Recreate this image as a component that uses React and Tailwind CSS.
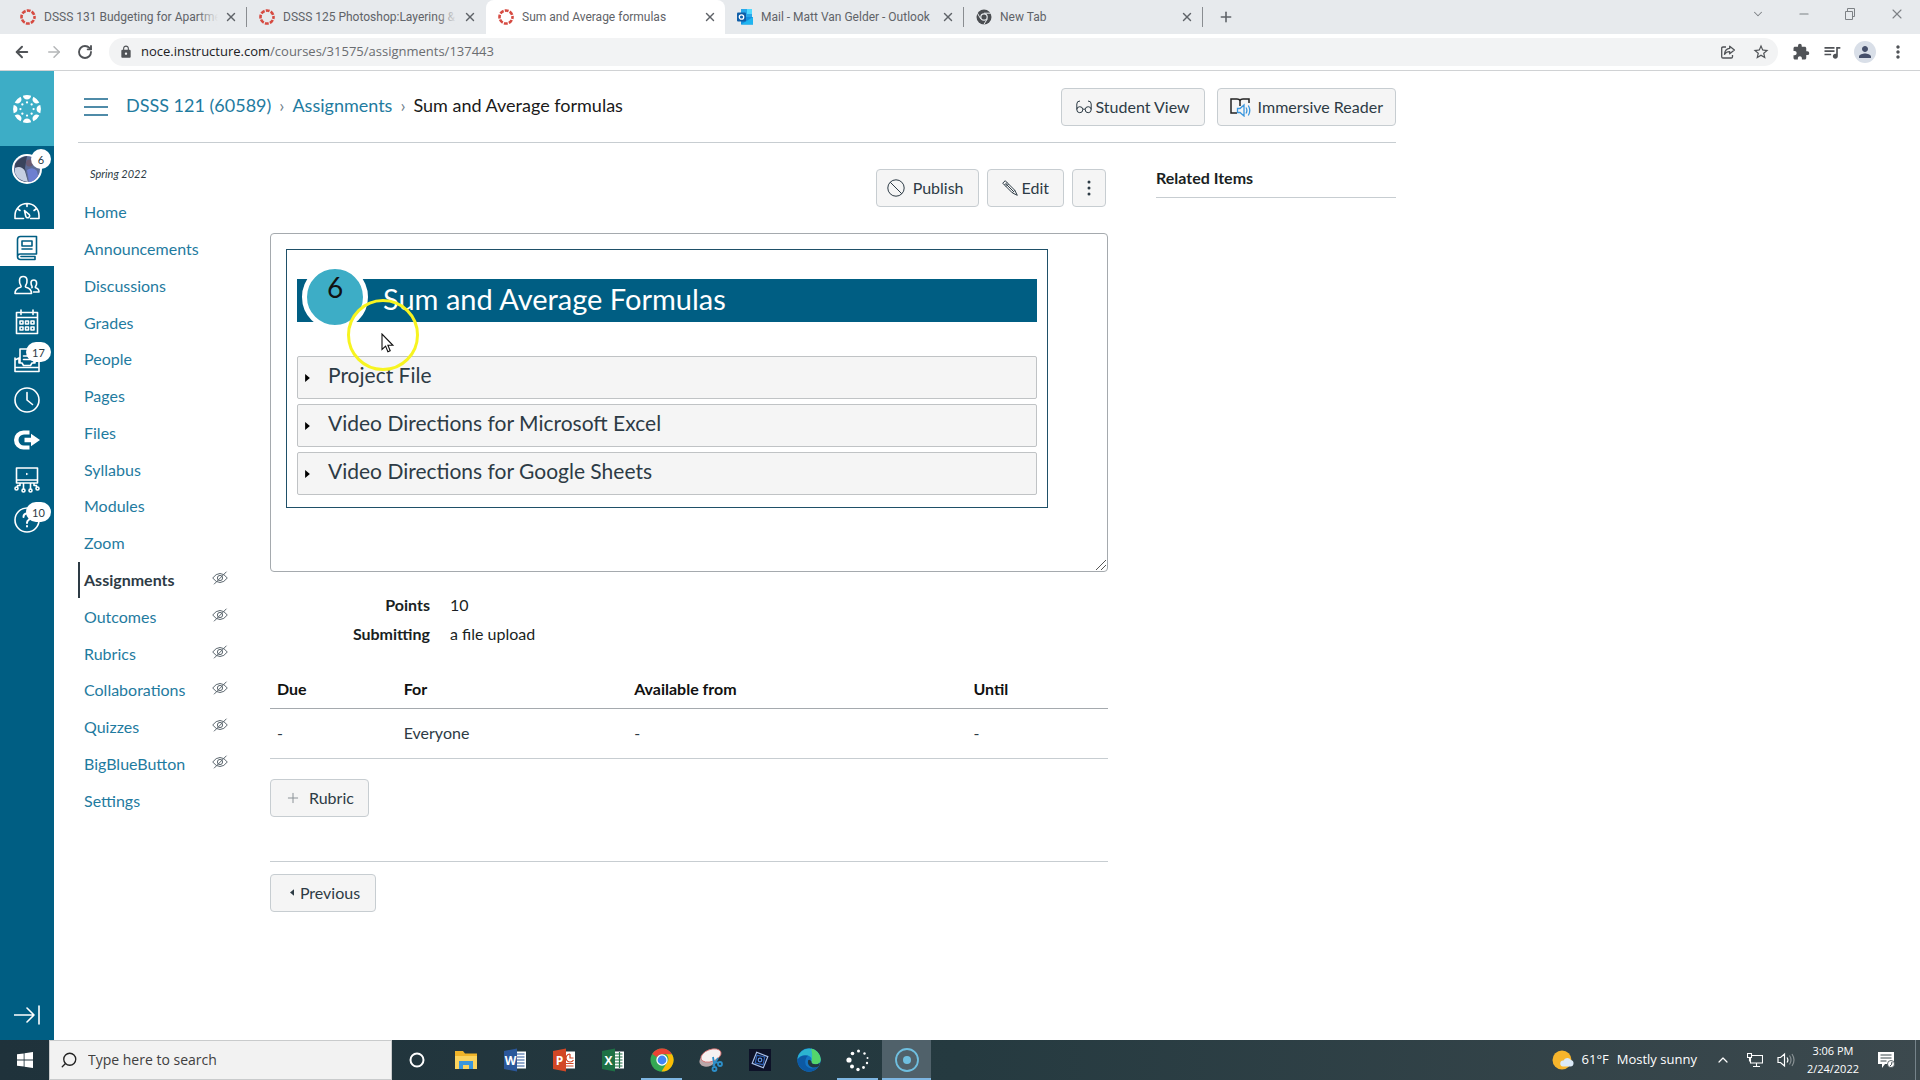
import React from "react";
import { X, Plus, ChevronDown, Minus, ArrowLeft, ArrowRight, RotateCw, Search, ChevronUp } from "lucide-react";
import { MdLock, MdExtension, MdQueueMusic, MdPerson, MdMoreVert, MdStarBorder } from "react-icons/md";

const ui = "font-['Open_Sans','Noto_Sans',sans-serif]";

function CanvasMark({ className }) {
  const spokes = [0, 45, 90, 135, 180, 225, 270, 315];
  return (
    <svg viewBox="-16 -16 32 32" className={className} fill="currentColor" aria-hidden="true">
      {spokes.map((a) => (
        <g key={a} transform={`rotate(${a})`}>
          <path d="M-4.4 -14.2 A15 15 0 0 1 4.4 -14.2 Q3.6 -10.2 0 -10.2 Q-3.6 -10.2 -4.4 -14.2Z" />
          <circle cx="0" cy="-7" r="1.2" />
        </g>
      ))}
    </svg>
  );
}

function CanvasFavicon() {
  return (
    <svg viewBox="0 0 16 16" className="size-4 shrink-0" aria-hidden="true">
      <circle cx="8" cy="8" r="6.5" fill="none" stroke="#d64b42" strokeWidth="2.6" strokeDasharray="3.9 1.2" strokeDashoffset="2" />
    </svg>
  );
}

function OutlookIcon() {
  return (
    <svg viewBox="0 0 16 16" className="size-4 shrink-0" aria-hidden="true">
      <path d="M4 0h11v9H4z" fill="#28a8ea" />
      <path d="M10 0h5v5h-5z" fill="#50d9ff" />
      <path d="M4 8h12v7.5H4z" fill="#1490df" />
      <path d="M4 15.5 16 8v7.5z" fill="#1fb5f0" />
      <rect x="0" y="3.5" width="9" height="9" rx="1" fill="#0f5ea8" />
      <circle cx="4.5" cy="8" r="2.2" fill="none" stroke="#fff" strokeWidth="1.3" />
    </svg>
  );
}

function ChromeGray() {
  return (
    <svg viewBox="0 0 16 16" className="size-4 shrink-0" aria-hidden="true">
      <circle cx="8" cy="8" r="7.5" fill="#4a4d51" />
      <circle cx="8" cy="8" r="3.8" fill="#e7eaed" />
      <circle cx="8" cy="8" r="2.6" fill="#4a4d51" />
      <path d="M8 4.2h6.8M4.7 9.9 1.4 4.1M11.3 9.9 7.9 15.4" stroke="#e7eaed" strokeWidth="1" />
    </svg>
  );
}

const tabs = [
  { title: "DSSS 131 Budgeting for Apartme", icon: <CanvasFavicon />, fade: true },
  { title: "DSSS 125 Photoshop:Layering &", icon: <CanvasFavicon />, fade: true, last: true },
  { title: "Sum and Average formulas", icon: <CanvasFavicon />, active: true },
  { title: "Mail - Matt Van Gelder - Outlook", icon: <OutlookIcon /> },
  { title: "New Tab", icon: <ChromeGray /> },
];

function TabStrip() {
  return (
    <div className="flex h-[34px] items-stretch bg-[#e7eaed] pl-2 text-[#5f6368]">
      {tabs.map((t) => (
        <div
          key={t.title}
          className={
            t.active
              ? "flex w-[239px] items-center rounded-t-lg bg-white pr-2"
              : "flex w-[239px] items-center"
          }
        >
          <div className="flex min-w-0 flex-1 items-center gap-2 pl-3">
            {t.icon}
            <span className="relative min-w-0 flex-1 overflow-hidden font-[Roboto,sans-serif] text-xs whitespace-nowrap">
              {t.title}
              {t.fade && <span className="absolute inset-y-0 right-0 w-5 bg-linear-to-r from-transparent to-[#e7eaed]" />}
            </span>
          </div>
          <button aria-label="Close tab" className={t.active ? "" : "ml-1.5 pr-2"}>
            <X className="size-3.5" strokeWidth={2.4} />
          </button>
          {!t.active && !t.last && <span className="h-5 w-px bg-[#8a8d91]" />}
          {t.last && <span className="w-px" />}
        </div>
      ))}
      <button aria-label="New tab" className="ml-[15px] self-center">
        <Plus className="size-4" strokeWidth={2.4} />
      </button>
      <div className="ml-auto flex items-center gap-8 pr-[15px] pb-1.5 text-[#7d8185]">
        <button aria-label="Search tabs"><ChevronDown className="size-3.5" strokeWidth={1.8} /></button>
        <button aria-label="Minimize"><Minus className="size-3.5" strokeWidth={1.8} /></button>
        <button aria-label="Restore">
          <svg viewBox="0 0 14 14" className="size-3.5" fill="none" stroke="currentColor"><path d="M2.5 4.5h7v8h-7zM4.5 4.5v-3h7v8h-2" /></svg>
        </button>
        <button aria-label="Close"><X className="size-4" strokeWidth={1.6} /></button>
      </div>
    </div>
  );
}

function Toolbar() {
  return (
    <div className="flex h-[37px] items-center border-b border-[#d0d2d4] bg-white pr-3 pl-[13px] text-[#505357]">
      <button aria-label="Back"><ArrowLeft className="size-[18px]" strokeWidth={2.6} /></button>
      <button aria-label="Forward" className="ml-3.5 text-[#b4b6b8]"><ArrowRight className="size-[18px]" strokeWidth={2} /></button>
      <button aria-label="Reload" className="ml-3.5"><RotateCw className="size-4" strokeWidth={2.8} /></button>
      <div className="ml-4 flex h-7 flex-1 items-center rounded-full bg-[#f2f3f4] pr-2 pl-2.5">
        <MdLock className="size-3.5" />
        <div className="ml-2 flex-1 text-[13px] text-[#6a6d71]">
          <span className="text-[#202124]">noce.instructure.com</span>/courses/31575/assignments/137443
        </div>
        <button aria-label="Share">
          <svg viewBox="0 0 16 16" className="size-4" fill="none" stroke="currentColor" strokeWidth="1.3" strokeLinejoin="round">
            <path d="M6 3H3Q1.7 3 1.7 4.3v8.4Q1.7 14 3 14h8.2q1.3 0 1.3-1.3V11" />
            <path d="M9.7 2.2 14.4 6 9.7 9.8V7.6Q6.3 7.5 4.5 10.3 5 4.8 9.7 4.4z" />
          </svg>
        </button>
        <button aria-label="Bookmark" className="ml-4"><MdStarBorder className="size-[18px]" /></button>
      </div>
      <button aria-label="Extensions" className="ml-3.5"><MdExtension className="size-[18px]" /></button>
      <button aria-label="Media" className="ml-3"><MdQueueMusic className="size-5" /></button>
      <button aria-label="Profile" className="ml-3 grid size-[22px] place-items-center rounded-full bg-[#d9dfe8] text-[#46506b]">
        <MdPerson className="size-[18px]" />
      </button>
      <button aria-label="Menu" className="ml-3"><MdMoreVert className="size-5" /></button>
    </div>
  );
}

function Count({ children }) {
  return (
    <span className="absolute top-0.5 left-[26px] grid h-5 min-w-5 place-items-center rounded-full bg-white px-1.5 text-[11px] leading-none text-[#2d3b45]">
      {children}
    </span>
  );
}

const line = { fill: "none", stroke: "currentColor", strokeWidth: 1.6, strokeLinejoin: "round", strokeLinecap: "round" };

const navIcons = {
  dashboard: (
    <svg viewBox="0 0 26 26" className="size-[26px]" {...line}>
      <path d="M9.500 20.500H1v-3a12 12 0 0 1 24 0v3h-8.500M13 5.500v3M4 11l2 1.500M22 11l-2 1.500M10.500 12.500l1.200 5.500a2 2 0 1 0 3.600-1.400z" />
    </svg>
  ),
  courses: (
    <svg viewBox="0 0 26 26" className="size-[26px]" {...line}>
      <path d="M22.500 1.500h-16q-3 0-3 3v17q0 3 3 3h14.500v-3M22.500 1.500v17.500h-16q-3 0-3 2.500M21 21.500H7M8 6h10v5H8zM8 14h10" />
    </svg>
  ),
  people: (
    <svg viewBox="0 0 26 26" className="size-[26px]" {...line}>
      <path d="M1 21.500q0-5 5.500-6.200 1-.3.300-1.800Q5.200 11.500 5.500 8q.3-3.500 3.700-3.500T13 8q.3 3.500-1.300 5.500-.7 1.500.3 1.800 5.500 1.200 5.500 6.200z" />
      <path d="M19.500 20H25q0-3.500-3.300-4.300-.7-.4 0-1.500 1-1.300.9-3.200-.2-3-2.800-3T17 10.500q0 2.200.9 3.700.6 1 0 1.500" />
    </svg>
  ),
  calendar: (
    <svg viewBox="0 0 26 26" className="size-[26px]" {...line}>
      <path d="M2.500 3.500h21v21h-21zM2.500 8.500h21M7 1v4.500M19 1v4.500M6 12h3v3H6zM11.500 12h3v3h-3zM17 12h3v3h-3zM6 18h3v3H6zM11.500 18h3v3h-3zM17 18h3v3h-3z" />
    </svg>
  ),
  inbox: (
    <svg viewBox="0 0 26 26" className="size-[26px]" {...line}>
      <path d="M1 11v13.500h24V11M1 20.500h24M1 13l4-2v5h3l1.500 2.500h7L18 16h3v-5l4 2M6 16V2h11l3 3v11M9.500 9h7M9.500 12.500h7" />
    </svg>
  ),
  history: (
    <svg viewBox="0 0 26 26" className="size-[26px]" {...line}>
      <circle cx="13" cy="13" r="12" /><path d="M13 5.500V13l5.500 4.500" />
    </svg>
  ),
  commons: (
    <svg viewBox="0 0 26 26" className="size-[26px]" fill="currentColor">
      <path d="M15.500 3.500v4h-5.500a5.500 5.500 0 0 0 0 11h5.500v4h-6a9.500 9.500 0 0 1 0-19z" />
      <path d="M10.500 10.800h6.500v-4L26 13l-9 6.200v-4h-6.500z" />
    </svg>
  ),
  studio: (
    <svg viewBox="0 0 26 26" className="size-[26px]" {...line}>
      <path d="M2.500 1h21v15h-21zM2.500 13h21M9.500 16v6M16.500 16v6M6 16v2.500H3.500v1.500M20 16v2.500h2.500V20" />
      <circle cx="2.500" cy="21.500" r="1.500" /><circle cx="9.500" cy="23.500" r="1.500" /><circle cx="16.500" cy="23.500" r="1.500" /><circle cx="23.500" cy="21.500" r="1.500" />
      <path d="M12 5.700 14.500 7 12 8.300z" fill="currentColor" stroke="none" />
    </svg>
  ),
  help: (
    <svg viewBox="0 0 26 26" className="size-[26px]" {...line}>
      <circle cx="13" cy="13" r="12" /><path d="M9.500 10Q9.500 6.500 13 6.500T16.500 10Q16.500 12 14.500 13 13 14 13 16M13 19v.500" strokeWidth="2" />
    </svg>
  ),
};

const navGroups = [
  {
    row: "relative flex h-[37px] items-center justify-center",
    items: [["dashboard", "Dashboard"], ["courses", "Courses"], ["people", "Groups"], ["calendar", "Calendar"]],
  },
  {
    row: "relative flex h-10 items-center justify-center",
    items: [["inbox", "Inbox", "17"], ["history", "History"], ["commons", "Commons"], ["studio", "Studio"], ["help", "Help", "10"]],
  },
];

function GlobalNav() {
  return (
    <nav className="flex w-[54px] shrink-0 flex-col bg-[#005e83] text-white">
      <a href="#home" aria-label="Canvas home" className="grid h-[75px] place-items-center bg-[#3dadc6]">
        <CanvasMark className="size-[30px]" />
      </a>
      <a href="#account" aria-label="Account" className="relative my-1 flex h-[38px] items-center justify-center">
        <svg viewBox="0 0 30 30" className="size-[30px]">
          <circle cx="15" cy="15" r="15" fill="#fff" />
          <circle cx="15" cy="15" r="13" fill="#5c6b96" />
          <path d="M3 10Q8 3 15 2l-2 12 3 14Q8 28 4 21z" fill="#39435c" />
          <path d="M3 14q6-3 10 3l3 11Q6 27 3 19z" fill="#c5cfe2" />
          <path d="M15 16q6-4 10 1l1 5q-4 6-9 6z" fill="#6d7fd0" />
          <circle cx="17.500" cy="9" r="3.500" fill="#6a5a72" />
        </svg>
        <span className="absolute -top-px left-[31px] grid size-5 place-items-center rounded-full bg-white text-[11px] leading-none text-[#2d3b45]">6</span>
      </a>
      {navGroups.map((group) => (
        <ul key={group.row}>
          {group.items.map(([id, label, count]) => (
            <li key={id} className={id === "courses" ? "bg-white text-[#005e83]" : ""}>
              <a href={"#" + id} aria-label={label} className={group.row}>
                {navIcons[id]}
                {count && <Count>{count}</Count>}
              </a>
            </li>
          ))}
        </ul>
      ))}
      <button aria-label="Expand navigation" className="mt-auto flex h-[50px] items-center justify-center">
        <svg viewBox="0 0 26 20" className="h-5 w-[26px]" {...line}><path d="M0 10h20M13 3l7 7-7 7M25 1v18" /></svg>
      </button>
    </nav>
  );
}

const courseLinks = [
  ["Home"], ["Announcements"], ["Discussions"], ["Grades"], ["People"], ["Pages"], ["Files"], ["Syllabus"],
  ["Modules"], ["Zoom"], ["Assignments", true, true], ["Outcomes", true], ["Rubrics", true],
  ["Collaborations", true], ["Quizzes", true], ["BigBlueButton", true], ["Settings"],
];

function HiddenEye() {
  return (
    <svg viewBox="0 0 16 14" className="mb-1 h-3.5 w-4 text-[#5b666e]" fill="none" stroke="currentColor" strokeWidth="1" aria-hidden="true">
      <path d="M.7 7Q4 2.500 8 2.500T15.300 7Q12 11.500 8 11.500T.7 7zM14.500.7 2 13.300" /><circle cx="8" cy="7" r="2.600" />
    </svg>
  );
}

function CourseNav() {
  return (
    <aside className="w-[150px] shrink-0">
      <p className="pt-[23px] pl-3 text-[11px] leading-4 text-[#2d3b45] italic">Spring 2022</p>
      <ul className="mt-3 grid min-h-[625px] auto-rows-fr">
        {courseLinks.map(([name, hidden, active]) => (
          <li
            key={name}
            className={
              active
                ? "flex items-center justify-between border-l-2 border-[#2d3b45] pl-1 font-bold text-[#2d3b45]"
                : "flex items-center justify-between pl-1.5 text-[#1f7ba0]"
            }
          >
            <a href={"#" + name}>{name}</a>
            {hidden && <HiddenEye />}
          </li>
        ))}
      </ul>
    </aside>
  );
}

const btn = "flex h-[38px] items-center justify-center rounded-sm border border-[#c7cdd1] bg-[#f5f5f5] text-[#2d3b45]";

function Triangle({ left }) {
  return (
    <svg viewBox="0 0 6 10" className={left ? "h-[7px] w-1" : "h-2 w-[5px]"} fill="currentColor" aria-hidden="true">
      <path d={left ? "M6 0v10L0 5z" : "M0 0v10l6-5z"} />
    </svg>
  );
}

function Pointer() {
  return (
    <div className="pointer-events-none absolute top-5 left-[50px] z-10 size-[72px] rounded-full border-[3px] border-[#f7f420]">
      <svg viewBox="0 0 14 20" className="absolute top-[31px] left-[31px] h-5 w-3.5" fill="#fff" stroke="#111" strokeWidth="1.100">
        <path d="M1 1v15.500l3.600-3.400 2.300 5.600 2.300-1-2.300-5.400h5z" />
      </svg>
    </div>
  );
}

function Description() {
  return (
    <section className="relative mt-[26px] min-h-[339px] rounded border border-[#a5aaae] px-[15px] py-[15px]">
      <div className="mr-11 border border-[#1f5068] px-2.5 pt-[29px] pb-3">
        <div className="relative flex h-[43px] items-center bg-[#005e83] pb-1 pl-[86px]">
          <span className="absolute -top-[15px] left-[5px] flex size-[66px] items-start justify-center rounded-full border-[5px] border-white bg-[#3dadc6] text-[28px] leading-9 text-[#111]">6</span>
          <h1 className="text-[29px] leading-9 text-white">Sum and Average Formulas</h1>
          <Pointer />
        </div>
        <div className="mt-[34px] flex flex-col gap-[5px] text-[21px] text-[#2d3b45]">
          {["Project File", "Video Directions for Microsoft Excel", "Video Directions for Google Sheets"].map((t) => (
            <button key={t} className="flex h-[43px] items-center gap-[18px] rounded-xs border border-[#c0c3c5] bg-[#f5f5f5] pl-[7px] text-left">
              <span className="text-black"><Triangle /></span>
              <span className="pb-1.5">{t}</span>
            </button>
          ))}
        </div>
      </div>
      <svg viewBox="0 0 10 10" className="absolute right-px bottom-px size-2.5" stroke="#555" aria-hidden="true"><path d="M0 10 10 0M5 10l5-5" /></svg>
    </section>
  );
}

function Assignment() {
  return (
    <main className="ml-[42px] min-w-0 flex-1">
      <div className="flex justify-end gap-2 pt-[26px] pr-0.5">
        <button className={btn + " gap-2 pr-3.5 pl-2.5"}>
          <svg viewBox="0 0 18 18" className="size-[18px]" fill="none" stroke="currentColor"><circle cx="9" cy="9" r="8.200" /><path d="m3.200 3.200 11.600 11.600" /></svg>
          Publish
        </button>
        <button className={btn + " gap-1 px-3.5"}>
          <svg viewBox="0 0 16 16" className="size-4" fill="none" stroke="currentColor" strokeLinejoin="round">
            <path d="M.700 3.200 3.200.700 12.800 10.300 15.300 15.300 10.300 12.800zM2.500 5 5 2.500M4 6.500 6.500 4M4.200 4.200l7.500 7.500M10.300 12.800l2.500-2.500" />
          </svg>
          Edit
        </button>
        <button aria-label="More options" className={btn + " w-[34px]"}>
          <svg viewBox="0 0 4 16" className="h-4 w-1" fill="currentColor"><circle cx="2" cy="2" r="1.500" /><circle cx="2" cy="8" r="1.500" /><circle cx="2" cy="14" r="1.500" /></svg>
        </button>
      </div>
      <Description />
      <dl className="mt-[18px] grid grid-cols-[160px_1fr] gap-x-5 leading-[29px] text-[#1a1f23]">
        <dt className="text-right font-bold">Points</dt><dd>10</dd>
        <dt className="text-right font-bold">Submitting</dt><dd>a file upload</dd>
      </dl>
      <table className="mt-[22px] w-full table-fixed text-left">
        <colgroup><col className="w-[15%]" /><col className="w-[27.5%]" /><col className="w-[40.5%]" /><col /></colgroup>
        <thead>
          <tr className="h-[38px] border-b border-[#a5aaae] text-[#111]">
            <th className="pl-[7px]">Due</th><th className="pl-2">For</th><th className="pl-2">Available from</th><th className="pl-2">Until</th>
          </tr>
        </thead>
        <tbody>
          <tr className="h-[50px] border-b border-[#c7cdd1]">
            <td className="pl-[7px]">-</td><td className="pl-2">Everyone</td><td className="pl-2">-</td><td className="pl-2">-</td>
          </tr>
        </tbody>
      </table>
      <button className={btn + " mt-5 gap-2 px-3.5"}>
        <Plus className="size-4 text-[#8b9297]" strokeWidth={1.5} /> Rubric
      </button>
      <div className="mt-11 border-t border-[#c7cdd1] pt-3">
        <a href="#previous" className={btn + " w-[106px] gap-1.5 pl-1"}><Triangle left /> Previous</a>
      </div>
    </main>
  );
}

function Page() {
  return (
    <div className="flex flex-1 text-base text-[#2d3b45]">
      <GlobalNav />
      <div className="ml-6 flex max-w-[1318px] flex-1 flex-col">
        <header className="flex h-[72px] items-center border-b border-[#c7cdd1]">
          <button aria-label="Course menu" className="ml-1.5 flex w-6 flex-col gap-1.5">
            <span className="h-0.5 bg-[#4f8ba8]" /><span className="h-0.5 bg-[#4f8ba8]" /><span className="h-0.5 bg-[#4f8ba8]" />
          </button>
          <nav className="ml-[18px] flex items-center gap-2 pb-1 text-lg">
            <a href="#course" className="text-[#1f7ba0]">DSSS 121 (60589)</a>
            <span className="text-[#73818c]">›</span>
            <a href="#assignments" className="text-[#1f7ba0]">Assignments</a>
            <span className="text-[#73818c]">›</span>
            <span className="text-[#1a1a1a]">Sum and Average formulas</span>
          </nav>
          <button className={btn + " ml-auto gap-1 px-3.5"}>
            <svg viewBox="0 0 16 14" className="h-3.5 w-4" fill="none" stroke="currentColor" strokeWidth="1"><circle cx="3.800" cy="9.700" r="3" /><circle cx="12.200" cy="9.700" r="3" /><path d="M6.800 9.500q1.200-1.200 2.400 0M.800 9.500V4Q.800 1 4 1M15.200 9.500V4Q15.200 1 12 1" /></svg>
            Student View
          </button>
          <button className={btn + " ml-3 gap-[7px] px-3"}>
            <svg viewBox="0 0 21 20" className="h-5 w-[21px]" fill="none" stroke="#222" strokeWidth="1.500">
              <path d="M7 16H1V2h6q2.500 0 3 1.800V9M10 3.800Q10.500 2 13 2h6v4" />
              <path d="M7.500 11.500H10l4-3.500v11l-4-3.500H7.500zM16 10.500q1.800 3 0 6M18.300 8.500q3 5 0 10" stroke="#3a96dd" strokeWidth="1.300" />
            </svg>
            Immersive Reader
          </button>
        </header>
        <div className="flex">
          <CourseNav />
          <Assignment />
          <aside className="ml-12 w-[240px] shrink-0 pt-[23px]">
            <h2 className="border-b border-[#c7cdd1] pb-[7px] leading-6 font-bold text-[#1a1f23]">Related Items</h2>
          </aside>
        </div>
      </div>
    </div>
  );
}

function OfficeIcon({ letter, dark, sheet }) {
  return (
    <svg viewBox="0 0 24 24" className="size-6" aria-hidden="true">
      <rect x="12" y="3.500" width="11" height="17" fill="#fff" />
      <g stroke={dark} strokeWidth="1.200" fill="none">{sheet}</g>
      <path d="M1 3 14 .500v23L1 21z" fill={dark} />
      <text x="7.500" y="16.500" textAnchor="middle" fontSize="12" fontWeight="700" fill="#fff" fontFamily="Open Sans">{letter}</text>
    </svg>
  );
}

const taskIcons = [
  ["Cortana", <svg viewBox="0 0 24 24" className="size-6"><circle cx="12" cy="12" r="6.500" fill="none" stroke="#fff" strokeWidth="2" /></svg>],
  ["File Explorer", <svg viewBox="0 0 24 24" className="size-6"><path d="M1 3h8l2 2.500h12V21H1z" fill="#f0b429" /><path d="M1 8h22v13H1z" fill="#fbd35e" /><path d="M5 13h14v8h-4v-4H9v4H5z" fill="#3a96dd" /></svg>],
  ["Word", <OfficeIcon letter="W" dark="#2b579a" sheet={<path d="M14 6h7.500M14 9h7.500M14 12h7.500M14 15h7.500M14 18h7.500" />} />],
  ["PowerPoint", <OfficeIcon letter="P" dark="#d24726" sheet={<path d="M14 15.500h7.500M14 18h7.500M18 6v4h3.500M18 6a4 4 0 1 0 3.500 6" />} />],
  ["Excel", <OfficeIcon letter="X" dark="#1e7145" sheet={<path d="M14 6h7.500M14 9h7.500M14 12h7.500M14 15h7.500M14 18h7.500M18.500 4v16" />} />],
  ["Chrome", (
    <svg viewBox="0 0 24 24" className="size-6">
      <circle cx="12" cy="12" r="11.500" fill="#34a853" />
      <path d="M12 .500A11.500 11.500 0 0 1 22 6.300H12a5.700 5.700 0 0 0-5 3L2.300 6A11.500 11.500 0 0 1 12 .500z" fill="#ea4335" />
      <path d="M22 6.300A11.500 11.500 0 0 1 11.500 23.500L17 14.800a5.700 5.700 0 0 0-1-8.500z" fill="#fbbc05" />
      <circle cx="12" cy="12" r="5.700" fill="#fff" /><circle cx="12" cy="12" r="4.400" fill="#4285f4" />
    </svg>
  ), true],
  ["Snipping Tool", (
    <svg viewBox="0 0 24 24" className="size-6">
      <ellipse cx="9.500" cy="11.500" rx="9.500" ry="6.500" transform="rotate(-25 9.500 11.500)" fill="#b9a7a9" />
      <ellipse cx="12" cy="7.500" rx="10.500" ry="6" transform="rotate(-20 12 7.500)" fill="#f6f2f2" stroke="#d46a6a" strokeWidth=".8" />
      <g fill="none" stroke="#2d8fc9" strokeWidth="1.800"><path d="m14 9 1.500 9M19 10l-5 8" /><circle cx="21" cy="16" r="2" /><circle cx="15.500" cy="21" r="2" /><path d="M14 14.500h5" /></g>
    </svg>
  )],
  ["Photoshop Elements", (
    <svg viewBox="0 0 24 24" className="size-6">
      <rect x="1" y="1" width="22" height="22" fill="#0d1228" />
      <g fill="none" stroke="#a9c0ea" strokeWidth="1.200"><rect x="6" y="6" width="12" height="12" transform="rotate(22 12 12)" /><rect x="8" y="8" width="8" height="8" transform="rotate(12 12 12)" stroke="#2f62b8" /><circle cx="12" cy="12" r="1.800" stroke="#5f93e0" /></g>
    </svg>
  )],
  ["Edge", (
    <svg viewBox="0 0 24 24" className="size-6">
      <circle cx="12" cy="12" r="11.700" fill="#1474c4" />
      <path d="M.400 11A11.700 11.700 0 0 1 23.700 11.500Q23.500 16 18.500 16.300 14 16 14.500 13.500 15.500 9 11 7.500 4 6 .400 11z" fill="#2cb4d0" />
      <path d="M14 .500A11.700 11.700 0 0 1 23.700 11.500Q23.500 16 18.500 16.300 14 16 14.500 13.500 16 6 14 .500z" fill="#54d66b" />
      <path d="M8.500 12Q7 19 14.500 20.500 18.500 21 22 18 17 25 9 23.200.500 20 .400 12 4 6.500 11 7.800 9 9 8.500 12z" fill="#0c59a4" />
      <path d="M14.500 13.500q-.5 2.500 4 2.800 2.500 0 4.200-1.500l-.6 3.200q-3 2-6.500 1.500Q10 18 11 12.500q1.500-2 3.500 1z" fill="#223740" />
    </svg>
  )],
  ["Loading app", (
    <svg viewBox="0 0 24 24" className="size-6" fill="#fff">
      {[[3, 12, 2.6], [6, 18.5, 2], [12, 21.5, 1.7], [17.5, 19.5, 1.4], [21, 15, 1.2], [21.5, 10, 1], [18.5, 5.5, 1.2], [12.5, 3, 1.5], [6.5, 5.5, 1.8]].map(([x, y, r]) => (
        <circle key={x} cx={x} cy={y} r={r} />
      ))}
    </svg>
  ), true],
  ["Recorder", (
    <svg viewBox="0 0 24 24" className="size-6"><circle cx="12" cy="12" r="11" fill="none" stroke="#6fbfe0" strokeWidth="1.800" /><circle cx="12" cy="12" r="4" fill="#6fbfe0" /></svg>
  ), true, true],
];

function Taskbar() {
  return (
    <footer className="flex h-10 items-stretch bg-linear-to-r from-[#1f323b] via-[#253a40] to-[#3c494e] text-white">
      <button aria-label="Start" className="grid w-[49px] place-items-center">
        <svg viewBox="0 0 16 16" className="size-4" fill="#fff"><path d="M0 2.300 6.700 1.400v6.200H0zM7.500 1.300 16 0v7.600H7.500zM0 8.400h6.700v6.200L0 13.700zM7.500 8.400H16V16l-8.500-1.300z" /></svg>
      </button>
      <label className="flex w-[343px] items-center gap-2.5 border border-[#c9cbcc] bg-[#f2f2f2] pl-2.5 text-[#333]">
        <Search className="size-[18px] shrink-0 -scale-x-100 text-[#222]" strokeWidth={1.8} />
        <input aria-label="Search" placeholder="Type here to search" className="w-full bg-transparent text-sm outline-none placeholder:text-[#404040]" />
      </label>
      <div className="flex">
        {taskIcons.map(([name, icon, running, active]) => (
          <button
            key={name}
            aria-label={name}
            className={active ? "relative grid w-[49px] place-items-center bg-[#50616a]" : "relative grid w-[49px] place-items-center"}
          >
            {icon}
            {running && <span className={active ? "absolute inset-x-0 bottom-0 h-0.5 bg-[#7eb6e2]" : "absolute inset-x-1 bottom-0 h-0.5 bg-[#7eb6e2]"} />}
          </button>
        ))}
      </div>
      <div className="ml-auto flex items-center text-[13px]">
        <svg viewBox="0 0 22 22" className="size-[22px]"><circle cx="10" cy="11" r="9.500" fill="#f7b52c" /><path d="M11 17.500a3 3 0 0 1 .500-6 4.200 4.200 0 0 1 7.500-.5 3.300 3.300 0 0 1-.5 6.500z" fill="#dbe9f7" /></svg>
        <span className="ml-2">61°F</span>
        <span className="ml-2">Mostly sunny</span>
        <ChevronUp className="ml-[18px] size-4" strokeWidth={1.8} />
        <svg viewBox="0 0 16 16" className="ml-4 size-4" fill="none" stroke="#fff" strokeWidth="1.100"><path d="M5 3.500h10.500v7.500H3.500V6M9.500 11v3M6 14.500h7M.500 1.500h4v4h-4zM2.500 5.500v4" /></svg>
        <svg viewBox="0 0 18 16" className="ml-3.5 h-4 w-[18px]" fill="none" stroke="#fff" strokeWidth="1.200"><path d="M1 5.500h2.500L7.500 2v12l-4-3.500H1zM10 5.500q1.800 2.500 0 5" /><path d="M12.500 3.500q3 4.500 0 9M15 2q4 6 0 12" opacity=".4" /></svg>
        <div className="ml-3 text-center text-[11px] leading-[18px]"><div>3:06 PM</div><div>2/24/2022</div></div>
        <svg viewBox="0 0 18 18" className="ml-[18px] size-[18px]"><path d="M1 1h16v12H8l-3 4v-4H1z" fill="#fff" /><path d="M3.500 4h11M3.500 7h11M3.500 10h6" stroke="#3b484d" /><circle cx="14" cy="13" r="3.500" fill="#fff" stroke="#3b484d" strokeWidth=".8" /><path d="M13 15q2-1 2-4" stroke="#3b484d" fill="none" /></svg>
        <span className="mr-1 ml-5 h-10 w-px bg-[#76838a]" />
      </div>
    </footer>
  );
}

export default function App() {
  return (
    <div className="flex min-h-screen flex-col bg-white font-['Lato',sans-serif]">
      <div className={ui}>
        <TabStrip />
        <Toolbar />
      </div>
      <Page />
      <div className={ui}>
        <Taskbar />
      </div>
    </div>
  );
}
